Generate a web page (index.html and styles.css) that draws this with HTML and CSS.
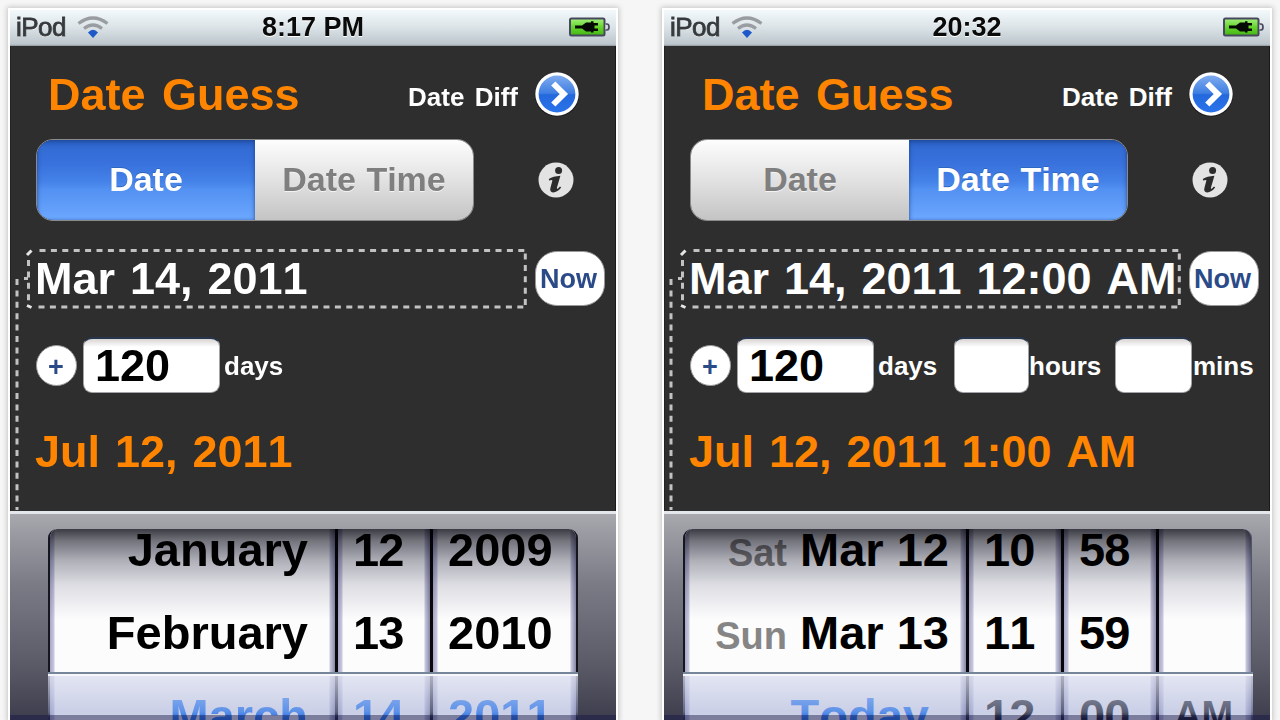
FILE: index.html
```
<!DOCTYPE html>
<html lang="en">
<head>
    <meta charset="UTF-8">
    <meta name="viewport" content="width=device-width, initial-scale=1.0">
    <title>Date Guess</title>
    <link rel="stylesheet" href="styles.css">
</head>
<body>

    <!-- shared icons -->
    <svg class="defs" width="0" height="0">
        <defs>
            <linearGradient id="blueBall" x1="0" y1="0" x2="0" y2="1">
                <stop offset="0" stop-color="#7fabee"/>
                <stop offset="0.48" stop-color="#3f7fe2"/>
                <stop offset="0.52" stop-color="#2468dc"/>
                <stop offset="1" stop-color="#2a73ea"/>
            </linearGradient>
            <linearGradient id="cell" x1="0" y1="0" x2="0" y2="1">
                <stop offset="0" stop-color="#a5f07c"/>
                <stop offset="0.5" stop-color="#66d52c"/>
                <stop offset="1" stop-color="#43b514"/>
            </linearGradient>
            <symbol id="wifi" viewBox="0 0 32 24">
                <path d="M1.5 7.5 Q16 -3.5 30.5 7.5" fill="none" stroke="#999da1" stroke-width="3.2"/>
                <path d="M7 12.5 Q16 5.5 25 12.5" fill="none" stroke="#999da1" stroke-width="3.2"/>
                <path d="M11 16.5 Q16 11 21 16.5 L16 22 Z" fill="#1f58c8"/>
            </symbol>
            <symbol id="battery" viewBox="0 0 42 22">
                <rect x="2" y="1.5" width="34.5" height="17" rx="1.5" fill="url(#cell)" stroke="#47485f" stroke-width="2"/>
                <path d="M37.5 7 H39 Q41 7 41 10 Q41 13 39 13 H37.5" fill="#d5dadd" stroke="#47485f" stroke-width="1.7"/>
                <path d="M7 8.5 H14 L18 5.5 H23 V4.3 H25.5 V6 H30 V8.5 H26.5 V11.5 H30 V14 H25.5 V15.5 H23 V14.5 H18 L14 11.5 H7 Z" fill="#050b04"/>
            </symbol>
            <symbol id="arrow" viewBox="0 0 46 46">
                <circle cx="23" cy="23.5" r="22.3" fill="#1c1c1c"/>
                <circle cx="23" cy="23" r="21.7" fill="#fff"/>
                <circle cx="23" cy="23" r="18.4" fill="url(#blueBall)"/>
                <path d="M19.3 12.5 L29.8 23 L19.3 33.5" fill="none" stroke="#fff" stroke-width="6"/>
            </symbol>
            <symbol id="info" viewBox="0 0 36 36">
                <circle cx="18" cy="18" r="17.5" fill="#e3e3e3"/>
                <circle cx="20.6" cy="8.6" r="3.5" fill="#2c2c2c"/>
                <path d="M10.8 17 Q15 14.3 22.4 13.8 L19 25.5 Q18.6 27.4 20 26.6 L22 24.4 L23.2 25.6 Q19.5 30.5 15 30.4 Q11.4 29.8 12.4 26 L14.4 18.6 Q14.6 17.4 11.2 18.4 Z" fill="#2c2c2c"/>
            </symbol>
            <symbol id="dashes" viewBox="0 0 606 466">
                <g fill="none" stroke="#c2c2c2" stroke-width="3">
                    <path d="M29.5 204.5 H516" stroke-dasharray="6 5.4"/>
                    <path d="M28.5 261 H516" stroke-dasharray="6 5.4"/>
                    <path d="M515.3 207.5 V260" stroke-dasharray="6 5.4"/>
                    <path d="M18.5 214 V260" stroke-dasharray="6 5.4"/>
                    <path d="M14 232.5 H18" />
                    <path d="M7 233 V464" stroke-dasharray="6 5.4"/>
                    <path d="M17 209 L21.5 204.5 M17 259.5 L21.5 261.5" stroke="#e6e6e6"/>
                </g>
            </symbol>
        </defs>
    </svg>

    <!-- Date mode -->
    <div class="phone">
        <div class="status-bar">
            <div class="carrier"><span class="device">iPod</span> <svg class="wifi"><use href="#wifi"/></svg></div>
            <div class="clock">8:17 PM</div>
            <svg class="battery"><use href="#battery"/></svg>
        </div>

        <div class="panel">
            <svg class="dashes"><use href="#dashes"/></svg>
            <div class="header">
                <h1>Date Guess</h1>
                <span class="diff">Date Diff</span>
                <svg class="arrow"><use href="#arrow"/></svg>
            </div>
            <div class="mode-row">
                <div class="segments">
                    <div class="segment selected">Date</div>
                    <div class="segment">Date Time</div>
                </div>
                <svg class="info"><use href="#info"/></svg>
            </div>
            <div class="date-row">
                <div class="start-date">Mar 14, 2011</div>
                <div class="now">Now</div>
            </div>
            <div class="amount-row">
                <div class="plus">+</div>
                <div class="field days-field">120</div>
                <span class="unit days">days</span>
            </div>
            <div class="result">Jul 12, 2011</div>
        </div>

        <div class="picker">
            <div class="wheels">
                <div class="wheel month">
                    <div>January</div>
                    <div>February</div>
                    <div class="current">March</div>
                </div>
                <div class="wheel day">
                    <div>12</div>
                    <div>13</div>
                    <div class="current">14</div>
                </div>
                <div class="wheel year">
                    <div>2009</div>
                    <div>2010</div>
                    <div class="current">2011</div>
                </div>
                <div class="shade"></div>
            </div>
            <div class="selection"></div>
            <div class="dim"></div>
        </div>
    </div>

    <!-- Date Time mode -->
    <div class="phone">
        <div class="status-bar">
            <div class="carrier"><span class="device">iPod</span> <svg class="wifi"><use href="#wifi"/></svg></div>
            <div class="clock">20:32</div>
            <svg class="battery"><use href="#battery"/></svg>
        </div>

        <div class="panel">
            <svg class="dashes"><use href="#dashes"/></svg>
            <div class="header">
                <h1>Date Guess</h1>
                <span class="diff">Date Diff</span>
                <svg class="arrow"><use href="#arrow"/></svg>
            </div>
            <div class="mode-row">
                <div class="segments">
                    <div class="segment">Date</div>
                    <div class="segment selected">Date Time</div>
                </div>
                <svg class="info"><use href="#info"/></svg>
            </div>
            <div class="date-row">
                <div class="start-date">Mar 14, 2011 12:00 AM</div>
                <div class="now">Now</div>
            </div>
            <div class="amount-row">
                <div class="plus">+</div>
                <div class="field days-field">120</div>
                <span class="unit days">days</span>
                <div class="field hours-field"></div>
                <span class="unit hours">hours</span>
                <div class="field mins-field"></div>
                <span class="unit mins">mins</span>
            </div>
            <div class="result">Jul 12, 2011 1:00 AM</div>
        </div>

        <div class="picker wide">
            <div class="wheels">
                <div class="wheel date">
                    <div><span class="weekday">Sat</span> Mar 12</div>
                    <div><span class="weekday">Sun</span> Mar 13</div>
                    <div class="current today">Today</div>
                </div>
                <div class="wheel hour">
                    <div>10</div>
                    <div>11</div>
                    <div>12</div>
                </div>
                <div class="wheel minute">
                    <div>58</div>
                    <div>59</div>
                    <div>00</div>
                </div>
                <div class="wheel ampm">
                    <div></div>
                    <div></div>
                    <div>AM</div>
                </div>
                <div class="shade"></div>
            </div>
            <div class="selection"></div>
            <div class="dim"></div>
        </div>
    </div>

</body>
</html>
```
FILE: styles.css
```
* {
    box-sizing: border-box;
}

body {
    font-family: "Liberation Sans", Arial, sans-serif;
    font-weight: bold;
    font-kerning: none;
    margin: 0;
    padding: 10px 10px 0;
    height: 720px;
    display: flex;
    justify-content: space-between;
    background-color: #f6f6f6;
    overflow: hidden;
    white-space: nowrap;
}

.defs {
    position: absolute;
}

.phone {
    width: 606px;
    height: 710px;
    display: flex;
    flex-direction: column;
    box-shadow: 0 0 0 2px #fff, 0 0 5px 3px #c4c4c4;
}

/* status bar */
.status-bar {
    height: 36px;
    padding: 0 6px;
    display: grid;
    grid-template-columns: 1fr auto 1fr;
    align-items: center;
    background: linear-gradient(#f3f9fb, #dde5e9 45%, #bcc6cc 95%, #8e979d);
    color: #0a0a0a;
    font-size: 27px;
    line-height: 34px;
    text-shadow: 0 1px 0 #fff;
}

.clock {
    height: 36px;
}

.carrier {
    display: flex;
    align-items: center;
    color: #363a3d;
    font-size: 26px;
    font-weight: normal;
    -webkit-text-stroke: 0.8px #363a3d;
}

.device {
    width: 61px;
    height: 36px;
    line-height: 35px;
    letter-spacing: -0.5px;
}

.wifi {
    width: 32px;
    height: 24px;
}

.battery {
    width: 42px;
    height: 22px;
    justify-self: end;
}

/* dark panel */
.panel {
    position: relative;
    height: 465px;
    padding-top: 26px;
    background-color: #2e2e2e;
    border-left: 1px solid #222;
    border-right: 1px solid #1a1a1a;
    color: #fff;
}

.dashes {
    position: absolute;
    left: -1px;
    top: 0;
    width: 606px;
    height: 466px;
}

.header {
    height: 45px;
    padding: 0 35px 0 37px;
    display: flex;
    align-items: center;
}

h1 {
    margin: 0;
    flex-grow: 1;
    color: #ff8400;
    font-size: 45px;
    line-height: 45px;
    word-spacing: 4px;
}

.diff {
    padding-top: 5px;
    margin-right: 16px;
    font-size: 26px;
    word-spacing: 3px;
}

.arrow {
    width: 46px;
    height: 46px;
    margin-bottom: 1px;
}

.mode-row {
    margin-top: 22px;
    height: 82px;
    padding: 0 41px 0 25px;
    display: flex;
    justify-content: space-between;
    align-items: center;
}

.segments {
    width: 438px;
    height: 82px;
    display: flex;
    border: 1px solid #8b8b8b;
    border-radius: 17px;
    overflow: hidden;
}

.segment {
    flex: 1;
    text-align: center;
    font-size: 34px;
    line-height: 79px;
    word-spacing: 1px;
    color: #7f7f7f;
    text-shadow: 0 1px 0 #f4f4f4;
    background: linear-gradient(#fdfdfd, #e2e2e2 50%, #c4c4c4);
}

.segment.selected {
    color: #fff;
    text-shadow: 0 -1px 0 #2f66c0;
    background: linear-gradient(#2f68d0, #3972dd 30%, #4482e8 52%, #5391f2 62%, #6ca8ff);
    box-shadow: inset 0 3px 5px rgba(20, 50, 120, 0.45), inset 0 0 3px rgba(20, 50, 120, 0.45);
}

.info {
    width: 36px;
    height: 36px;
}

.date-row {
    margin-top: 29px;
    height: 57px;
    padding: 0 10px 0 24px;
    display: flex;
    justify-content: space-between;
    align-items: center;
}

.start-date,
.result {
    font-size: 45px;
    line-height: 57px;
    word-spacing: 2.4px;
}

.start-date {
    width: 490px;
}

.now {
    width: 70px;
    height: 55px;
    border: 1px solid #999;
    border-radius: 22px;
    background-color: #fff;
    color: #2b4a88;
    font-size: 27px;
    line-height: 54px;
    text-align: center;
    text-indent: -3px;
}

.amount-row {
    margin-top: 30px;
    height: 56px;
    padding-left: 25px;
    display: flex;
    align-items: center;
}

.plus {
    width: 41px;
    height: 41px;
    margin: 1px 6px 0 0;
    border: 1px solid #9a9a9a;
    border-radius: 50%;
    background-color: #fff;
    color: #2b4a88;
    font-size: 27px;
    line-height: 42px;
    text-align: center;
    text-indent: -1px;
}

.field {
    height: 56px;
    border: 1px solid #a4a4a8;
    border-top: 2px solid #26344c;
    border-radius: 9px;
    background: linear-gradient(#d8d3d3, #fff 8px);
    color: #000;
    font-size: 45px;
    line-height: 54px;
}

.days-field {
    width: 137px;
    padding-left: 11px;
    margin-right: 4px;
}

.hours-field {
    width: 75px;
}

.mins-field {
    width: 77px;
    margin-right: 1px;
}

.unit {
    padding-top: 2px;
    font-size: 26px;
}

.days {
    width: 76px;
}

.hours {
    width: 86px;
}

.result {
    margin-top: 30px;
    padding-left: 24px;
    color: #ff8400;
}

/* picker */
.picker {
    position: relative;
    height: 209px;
    padding: 15px 38px 0;
    border-top: 3px solid #e3e7eb;
    background: linear-gradient(#a8a8ae, #9a9aa2 20px, #7b7b86 70px, #5b5b68 150px, #3e3d4d 205px);
    color: #000;
    overflow: hidden;
}

.picker.wide {
    padding: 15px 18px 0 19px;
}

.wheels {
    position: relative;
    height: 191px;
    display: flex;
    border-radius: 9px 9px 0 0;
    border-left: 2px solid #16161f;
    border-right: 2px solid #16161f;
    overflow: hidden;
}

.wide .wheels {
    border-right: 1px solid #55556a;
}

.wheel {
    border-right: 3px solid #08080d;
    background: linear-gradient(90deg, #a9a9c8, #c9c9e0 4px, #fcfcfd 5px, #fcfcfd calc(100% - 6px), #c9c9e0 calc(100% - 5px), #8888a6);
    font-size: 47px;
    padding: 0 0 0 15px;
    overflow: hidden;
}

.wheel > div {
    height: 83px;
    line-height: 83px;
    margin-top: -21px;
    margin-bottom: 21px;
}

.month {
    width: 288px;
    padding-right: 27px;
    text-align: right;
}

.day,
.hour,
.minute {
    width: 95px;
    letter-spacing: -1px;
}

.year {
    flex: 1;
    border-right: none;
}

.date {
    width: 284px;
    padding: 0 17px 0 0;
    text-align: right;
}

.date .today {
    padding-right: 20px;
}

.ampm {
    flex: 1;
    border-right: none;
    font-size: 38px;
}

.weekday {
    color: #858585;
    font-size: 38px;
}

.wheel .current {
    color: #0a70ff;
}

.shade {
    position: absolute;
    left: 0;
    right: 0;
    top: 0;
    height: 90px;
    background: linear-gradient(#3c3c44, #75757e 12px, #b2b2bb 32px, #e0e0e5 56px, #fff);
    mix-blend-mode: multiply;
}

/* glass bar over the current row */
.selection {
    position: absolute;
    left: 38px;
    right: 38px;
    top: 158px;
    height: 80px;
    border-top: 2px solid #75859a;
    box-shadow: inset 0 2px 0 #f6f7fb;
    background: linear-gradient(rgba(222, 225, 240, 0.8), rgba(160, 170, 212, 0.55) 38px, rgba(110, 120, 170, 0.3) 44px);
}

.wide .selection {
    left: 19px;
    right: 17px;
}

.dim {
    position: absolute;
    left: 0;
    right: 0;
    top: 201px;
    height: 80px;
    background-color: rgba(20, 20, 70, 0.45);
}
```
